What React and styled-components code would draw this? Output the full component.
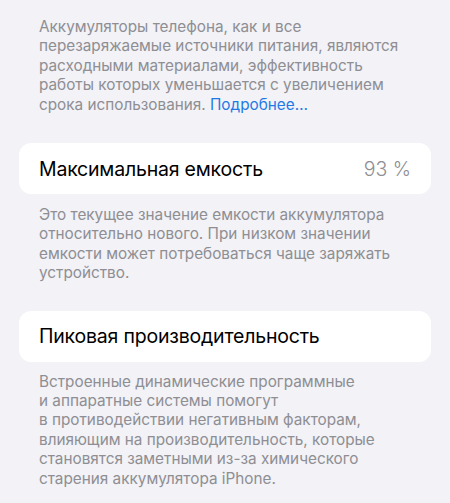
import React from "react"
import styled, { createGlobalStyle } from "styled-components"

const GlobalStyle = createGlobalStyle`
  html, body {
    margin: 0;
    padding: 0;
    background: #f2f2f7;
  }
  body {
    font-family: Inter, "Noto Sans", "Liberation Sans", sans-serif;
    -webkit-font-smoothing: antialiased;
  }
`

const Screen = styled.div`
  width: 450px;
  min-height: 503px;
  box-sizing: border-box;
  padding: 17px 19px 0;
  background: #f2f2f7;
`

const Footer = styled.p`
  margin: 0;
  padding: ${p => p.$top || 0}px 20px 0;
  font-size: 15.3px;
  line-height: 19.4px;
  letter-spacing: 0;
  color: #8e8e93;
`

const More = styled.a`
  color: #1f7ae6;
  text-decoration: none;
`

const Card = styled.div`
  display: flex;
  align-items: center;
  justify-content: space-between;
  height: 51px;
  margin-top: ${p => p.$top}px;
  padding: 0 20px;
  border-radius: 12px;
  background: #fff;
`

const Label = styled.span`
  font-size: 19.5px;
  letter-spacing: -0.2px;
  color: #000;
`

const Value = styled.span`
  font-size: 19.5px;
  font-weight: 300;
  color: #8e8e93;
`

export default function App() {
  return (
    <>
      <GlobalStyle />
      <Screen>
        <Footer>
          Аккумуляторы телефона, как и все
          <br />
          перезаряжаемые источники питания, являются
          <br />
          расходными материалами, эффективность
          <br />
          работы которых уменьшается с увеличением
          <br />
          срока использования. <More href="#">Подробнее…</More>
        </Footer>

        <Card $top={29}>
          <Label>Максимальная емкость</Label>
          <Value>93 %</Value>
        </Card>

        <Footer $top={11}>
          Это текущее значение емкости аккумулятора
          <br />
          относительно нового. При низком значении
          <br />
          емкости может потребоваться чаще заряжать
          <br />
          устройство.
        </Footer>

        <Card $top={28}>
          <Label>Пиковая производительность</Label>
        </Card>

        <Footer $top={10}>
          Встроенные динамические программные
          <br />
          и аппаратные системы помогут
          <br />
          в противодействии негативным факторам,
          <br />
          влияющим на производительность, которые
          <br />
          становятся заметными из-за химического
          <br />
          старения аккумулятора iPhone.
        </Footer>
      </Screen>
    </>
  )
}
